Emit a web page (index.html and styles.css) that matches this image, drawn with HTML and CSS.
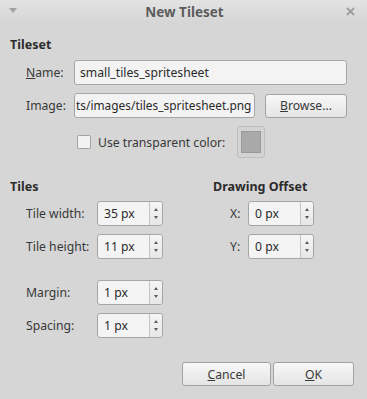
FILE: index.html
```html
<!DOCTYPE html>
<html lang="en">
<head>
    <meta charset="UTF-8">
    <title>New Tileset</title>
    <link rel="stylesheet" href="styles.css">
</head>
<body>
    <div class="dialog">
        <div class="titlebar">
            <svg class="menu-arrow" width="8" height="5" viewBox="0 0 8 5"><polygon points="0,0 8,0 4,5" /></svg>
            <span class="title">New Tileset</span>
            <svg class="close" width="9" height="9" viewBox="0 0 9 9"><path d="M1 1 L8 8 M8 1 L1 8" /></svg>
        </div>

        <div class="content">
            <h2>Tileset</h2>
            <div class="group">
                <div class="row">
                    <label class="label-name"><u>N</u>ame:</label>
                    <div class="field">small_tiles_spritesheet</div>
                </div>
                <div class="row">
                    <label class="label-name">Image:</label>
                    <div class="field field-image">ts/images/tiles_spritesheet.png</div>
                    <button class="button browse"><u>B</u>rowse...</button>
                </div>
                <div class="row check-row">
                    <span class="checkbox"></span>
                    <span class="check-label">Use transparent color:</span>
                    <span class="swatch"><span class="swatch-color"></span></span>
                </div>
            </div>

            <div class="columns">
                <div class="column column-tiles">
                    <h2>Tiles</h2>
                    <div class="group">
                        <div class="row">
                            <label class="label-spin">Tile width:</label>
                            <div class="spin"><span class="spin-value">35 px</span><span class="spin-arrows"><i class="up"></i><i class="down"></i></span></div>
                        </div>
                        <div class="row">
                            <label class="label-spin">Tile height:</label>
                            <div class="spin"><span class="spin-value">11 px</span><span class="spin-arrows"><i class="up"></i><i class="down"></i></span></div>
                        </div>
                        <div class="row spaced">
                            <label class="label-spin">Margin:</label>
                            <div class="spin"><span class="spin-value">1 px</span><span class="spin-arrows"><i class="up"></i><i class="down"></i></span></div>
                        </div>
                        <div class="row">
                            <label class="label-spin">Spacing:</label>
                            <div class="spin"><span class="spin-value">1 px</span><span class="spin-arrows"><i class="up"></i><i class="down"></i></span></div>
                        </div>
                    </div>
                </div>
                <div class="column column-offset">
                    <h2>Drawing Offset</h2>
                    <div class="group">
                        <div class="row">
                            <label class="label-xy">X:</label>
                            <div class="spin"><span class="spin-value">0 px</span><span class="spin-arrows"><i class="up"></i><i class="down"></i></span></div>
                        </div>
                        <div class="row">
                            <label class="label-xy">Y:</label>
                            <div class="spin"><span class="spin-value">0 px</span><span class="spin-arrows"><i class="up"></i><i class="down"></i></span></div>
                        </div>
                    </div>
                </div>
            </div>

            <div class="buttons">
                <button class="button cancel"><u>C</u>ancel</button>
                <button class="button ok"><u>O</u>K</button>
            </div>
        </div>
    </div>
</body>
</html>
```

FILE: styles.css
```css
* {
    margin: 0;
    padding: 0;
    box-sizing: border-box;
}

body {
    font-family: "Noto Sans", "Open Sans", sans-serif;
    font-size: 12.2px;
    color: #383838;
    background: #d6d6d6;
    width: 367px;
    height: 399px;
    overflow: hidden;
}

.titlebar {
    height: 24px;
    display: flex;
    align-items: center;
    justify-content: space-between;
    padding: 0 12px 0 9px;
    background: linear-gradient(#e3e3e3, #d5d5d5);
}

.menu-arrow {
    fill: #a3a3a3;
    margin-top: -3px;
}

.title {
    font-size: 13.5px;
    font-weight: bold;
    color: #5c5c5c;
    margin-left: 6px;
}

.close {
    stroke: #a0a0a0;
    stroke-width: 2;
    margin-top: -2px;
}

.content {
    padding: 13px 20px 0 10px;
}

h2 {
    font-size: 12.5px;
    font-weight: bold;
    color: #2c2c2c;
    line-height: 16px;
    margin-bottom: 7px;
}

.group {
    padding-left: 16px;
}

.row {
    display: flex;
    align-items: center;
    height: 25px;
    margin-bottom: 8px;
}

.label-name {
    width: 48px;
}

.field {
    flex: 1;
    height: 25px;
    line-height: 23px;
    padding: 0 6px 0 5px;
    background: #f3f3f3;
    border: 1px solid #a6a6a6;
    border-radius: 3px;
    color: #2a2a2a;
    white-space: nowrap;
    overflow: hidden;
}

.field-image {
    flex: none;
    width: 181px;
    padding: 0 0 0 1px;
    font-size: 11.9px;
}

.button {
    font-family: inherit;
    font-size: 12.2px;
    color: #383838;
    height: 24px;
    background: linear-gradient(#f8f8f8, #e4e4e4);
    border: 1px solid #a3a3a3;
    border-radius: 3px;
}

.browse {
    width: 82px;
    margin-left: 10px;
}

.check-row {
    height: 32px;
    padding-left: 51px;
}

.checkbox {
    width: 14px;
    height: 14px;
    background: #f2f2f2;
    border: 1px solid #a3a3a3;
    border-radius: 2px;
}

.check-label {
    margin-left: 7px;
    width: 139px;
}

.swatch {
    width: 28px;
    height: 32px;
    border: 1px solid #bdbdbd;
    border-radius: 3px;
    background: #d3d3d3;
    display: flex;
    align-items: center;
    justify-content: center;
}

.swatch-color {
    width: 20px;
    height: 22px;
    background: #a9a9a9;
    border: 1px solid #9a9a9a;
}

.columns {
    display: flex;
    margin-top: 21px;
}

.column-tiles {
    width: 203px;
}

.columns h2 {
    margin-bottom: 6px;
}

.label-spin {
    width: 71px;
}

.label-xy {
    width: 18px;
    margin-left: 1px;
}

.spaced {
    margin-top: 21px;
}

.spin {
    display: flex;
    width: 66px;
    height: 25px;
    background: #f4f4f4;
    border: 1px solid #a6a6a6;
    border-radius: 3px;
    color: #2a2a2a;
}

.spin-value {
    flex: 1;
    line-height: 23px;
    padding-left: 6px;
}

.spin-arrows {
    width: 13px;
    display: flex;
    flex-direction: column;
    align-items: center;
    justify-content: space-between;
    padding: 6px 0 6px;
    border-left: 1px solid #c4c4c4;
    background: linear-gradient(#f6f6f6, #e6e6e6);
    border-radius: 0 3px 3px 0;
}

.spin-arrows i {
    width: 0;
    height: 0;
    border-left: 2.5px solid transparent;
    border-right: 2.5px solid transparent;
}

.spin-arrows .up {
    border-bottom: 3px solid #5a5a5a;
}

.spin-arrows .down {
    border-top: 3px solid #5a5a5a;
}

.buttons {
    display: flex;
    justify-content: flex-end;
    gap: 2px;
    margin-top: 16px;
    margin-right: -7px;
}

.cancel {
    width: 89px;
}

.ok {
    width: 81px;
}
```
